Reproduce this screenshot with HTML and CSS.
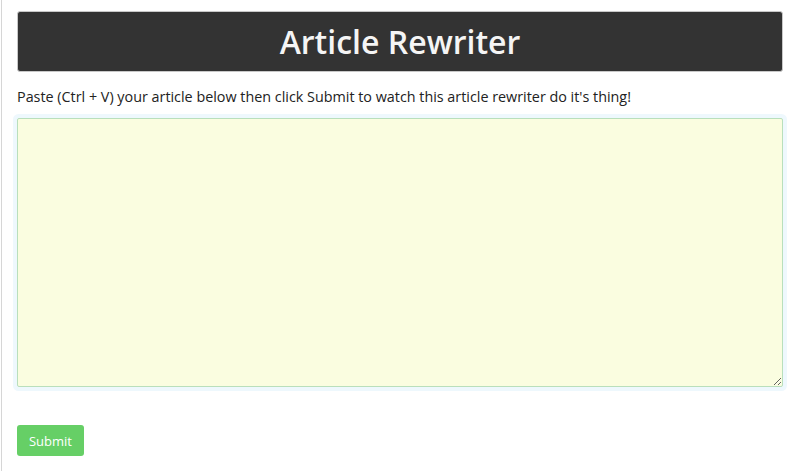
FILE: index.html
```html
<!DOCTYPE html>
<html>
<head>
<meta charset="utf-8">
<link rel="stylesheet" href="styles.css">
</head>
<body>
<div class="page">
  <h1 class="banner">Article Rewriter</h1>
  <p class="intro">Paste (Ctrl + V) your article below then click Submit to watch this article rewriter do it's thing!</p>
  <textarea class="article"></textarea>
  <button class="submit">Submit</button>
</div>
</body>
</html>
```

FILE: styles.css
```css
html, body {
  margin: 0;
  padding: 0;
  background: #fff;
}
body {
  font-family: "Open Sans", "Liberation Sans", sans-serif;
  color: #222;
}
.page {
  margin-left: 1px;
  border-left: 1px solid #d6d6d6;
  min-height: 471px;
  box-sizing: border-box;
  padding: 11px 13px 0 15px;
  display: flex;
  flex-direction: column;
  align-items: flex-start;
}
.banner {
  margin: 0;
  width: 100%;
  box-sizing: border-box;
  height: 61px;
  background: #333;
  border: 1px solid #c8c8c8;
  border-radius: 3px;
  color: #f5f5f5;
  font-weight: 600;
  font-size: 32px;
  line-height: 59px;
  text-align: center;
}
.intro {
  margin: 15px 0 0;
  font-size: 14.35px;
  line-height: 20px;
}
.article {
  margin: 11px 0 0;
  width: 100%;
  box-sizing: border-box;
  height: 269px;
  background: #fafde0;
  border: 1px solid #b9dfbc;
  border-radius: 2px;
  box-shadow: 0 0 0 4px #eef8fd;
  outline: none;
  font-family: inherit;
}
.submit {
  margin-top: 38px;
  width: 67px;
  height: 31px;
  background: #66cf66;
  color: #fff;
  border: none;
  border-radius: 3px;
  font-family: inherit;
  font-size: 13px;
  padding: 0;
}
```
